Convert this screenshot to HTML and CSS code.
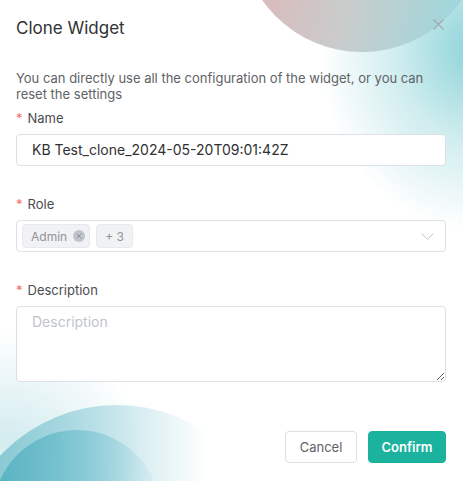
FILE: index.html
```html
<!DOCTYPE html>
<html lang="en">
<head>
<meta charset="utf-8">
<title>Clone Widget</title>
<link rel="stylesheet" href="styles.css">
</head>
<body>
<div class="dialog">
  <div class="deco deco-glow"></div>
  <div class="deco deco-tr"></div>
  <div class="deco deco-haze"></div>
  <div class="deco deco-bl1"></div>
  <div class="deco deco-bl2"></div>
  <div class="content">
    <header class="head">
      <span class="title">Clone Widget</span>
      <button class="close" aria-label="Close">
        <svg width="11" height="11" viewBox="0 0 11 11"><path d="M0.5 0.5 L10.5 10.5 M10.5 0.5 L0.5 10.5" stroke="#a3a6ad" stroke-width="1.1" fill="none"/></svg>
      </button>
    </header>
    <p class="desc">You can directly use all the configuration of the widget, or you can reset the settings</p>
    <div class="field">
      <label class="label"><span class="req">*</span>Name</label>
      <div class="input">KB Test_clone_2024-05-20T09:01:42Z</div>
    </div>
    <div class="field">
      <label class="label"><span class="req">*</span>Role</label>
      <div class="select">
        <span class="tag">Admin<span class="tag-close"><svg width="6" height="6" viewBox="0 0 6 6"><path d="M0.5 0.5 L5.5 5.5 M5.5 0.5 L0.5 5.5" stroke="#8a8d93" stroke-width="0.9" fill="none"/></svg></span></span>
        <span class="tag">+ 3</span>
        <svg class="chev" width="13" height="7" viewBox="0 0 13 7"><path d="M0.5 0.5 L6.5 6.3 L12.5 0.5" stroke="#c0c4cc" stroke-width="1" fill="none"/></svg>
      </div>
    </div>
    <div class="field">
      <label class="label"><span class="req">*</span>Description</label>
      <textarea class="textarea" placeholder="Description"></textarea>
    </div>
    <footer class="foot">
      <button class="btn btn-cancel">Cancel</button>
      <button class="btn btn-confirm">Confirm</button>
    </footer>
  </div>
</div>
</body>
</html>
```

FILE: styles.css
```css
* { box-sizing: border-box; }
html, body { margin: 0; padding: 0; background: #fff; }
body { font-family: Inter, "Noto Sans", sans-serif; color: #303133; }

.dialog {
  position: relative;
  width: 463px;
  height: 481px;
  overflow: hidden;
  background: #fff;
}

.deco { position: absolute; pointer-events: none; }
.deco-glow {
  left: 320px; top: -130px; width: 310px; height: 360px;
  border-radius: 50%;
  background: radial-gradient(closest-side, rgba(120, 204, 210, 0.85), rgba(150, 214, 218, 0.45) 50%, rgba(255, 255, 255, 0) 100%);
}
.deco-tr {
  left: 240px; top: -192px; width: 244px; height: 244px;
  border-radius: 50%;
  background: linear-gradient(100deg, #dcb9b9 15%, #c9cccc 50%, #a3d6da 85%);
}
.deco-haze {
  left: -120px; top: 330px; width: 260px; height: 220px;
  border-radius: 50%;
  background: radial-gradient(closest-side, rgba(130, 200, 210, 0.35), rgba(255, 255, 255, 0));
}
.deco-bl1 {
  left: -43px; top: 405px; width: 320px; height: 320px;
  border-radius: 50%;
  background: linear-gradient(90deg, #84c8d2 10%, rgba(160, 212, 222, 0.75) 40%, rgba(255, 255, 255, 0) 78%);
}
.deco-bl2 {
  left: -7px; top: 430px; width: 168px; height: 168px;
  border-radius: 50%;
  background: linear-gradient(90deg, #59b3c3 0%, rgba(110, 190, 205, 0.6) 55%, rgba(255, 255, 255, 0) 100%);
}

.content {
  position: relative;
  z-index: 1;
  padding: 16px 17px 0 16px;
  display: flex;
  flex-direction: column;
}

.head {
  display: flex;
  justify-content: space-between;
  align-items: flex-start;
  height: 24px;
}
.title {
  font-size: 17px;
  line-height: 24px;
  color: #303133;
}
.close {
  border: 0;
  background: none;
  padding: 0;
  margin: 3px 2px 0 0;
  width: 11px;
  height: 11px;
  display: flex;
}

.desc {
  margin: 30px 0 0 0;
  font-size: 13px;
  line-height: 16px;
  color: #606266;
}

.field { display: flex; flex-direction: column; }
.field + .field { margin-top: 30px; }
.desc + .field { margin-top: 8px; }

.label {
  font-size: 13px;
  line-height: 16px;
  color: #4a4c50;
  margin-bottom: 8px;
}
.req { color: #f56c6c; margin-right: 5px; }

.input {
  height: 32px;
  border: 1px solid #dcdfe6;
  border-radius: 4px;
  background: #fff;
  padding: 0 15px;
  font-size: 14px;
  line-height: 30px;
  color: #303133;
}

.select {
  height: 32px;
  border: 1px solid #dcdfe6;
  border-radius: 4px;
  background: #fff;
  padding: 0 11px 0 5px;
  display: flex;
  align-items: center;
  gap: 6px;
}
.tag {
  display: inline-flex;
  align-items: center;
  height: 24px;
  padding: 0 8px;
  background: #f0f2f5;
  border: 1px solid #e9e9eb;
  border-radius: 4px;
  font-size: 12px;
  color: #909399;
}
.tag:first-child { padding-right: 4px; }
.tag-close {
  width: 12px; height: 12px;
  margin-left: 6px;
  border-radius: 50%;
  background: #c0c4cc;
  display: inline-flex;
  align-items: center;
  justify-content: center;
}
.chev { margin-left: auto; }

.textarea {
  display: block;
  width: 100%;
  height: 76px;
  border: 1px solid #dcdfe6;
  border-radius: 4px;
  background: #fff;
  padding: 5px 15px;
  font-family: Inter, "Noto Sans", sans-serif;
  font-size: 14px;
  line-height: 20px;
  color: #303133;
  resize: vertical;
  outline: none;
}
.textarea::placeholder { color: #c0c4cc; }

.foot {
  display: flex;
  justify-content: flex-end;
  gap: 11px;
  margin-top: 49px;
}
.btn {
  height: 32px;
  border-radius: 4px;
  font-family: Inter, "Noto Sans", sans-serif;
  font-size: 13px;
  padding: 0;
  cursor: pointer;
}
.btn-cancel {
  width: 72px;
  background: #fff;
  border: 1px solid #dcdfe6;
  color: #606266;
}
.btn-confirm {
  width: 78px;
  background: #1bb29e;
  border: 1px solid #1bb29e;
  color: #fff;
  font-weight: 600;
}
```
